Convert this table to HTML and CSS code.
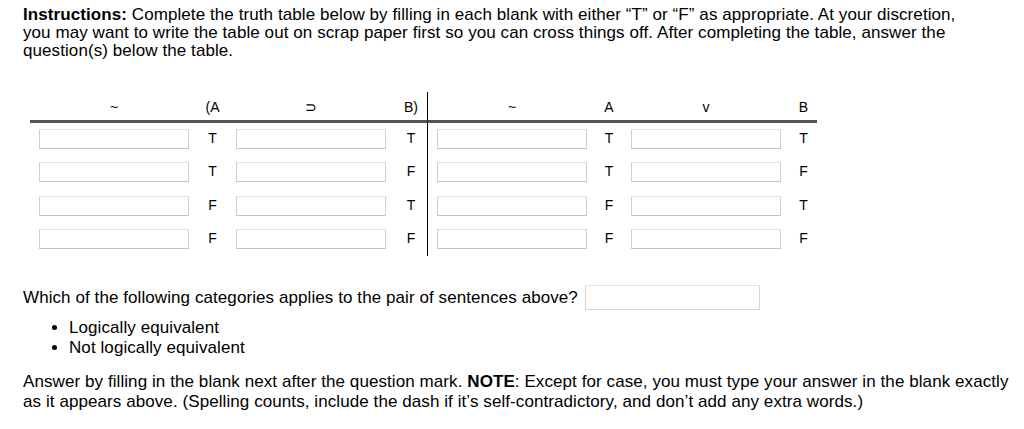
FILE: index.html
```html
<!DOCTYPE html>
<html>
<head>
<meta charset="utf-8">
<link rel="stylesheet" href="styles.css">
</head>
<body>
<div class="page">
  <p class="instructions"><b>Instructions:</b> Complete the truth table below by filling in each blank with either “T” or “F” as appropriate. At your discretion, you may want to write the table out on scrap paper first so you can cross things off. After completing the table, answer the question(s) below the table.</p>

  <div class="truth">
    <div class="hd">~</div>
    <div class="hd">(A</div>
    <div class="hd">⊃</div>
    <div class="hd split">B)</div>
    <div class="hd">~</div>
    <div class="hd">A</div>
    <div class="hd">v</div>
    <div class="hd">B</div>

    <div class="in"><span class="box"></span></div><div class="tv">T</div><div class="in"><span class="box"></span></div><div class="tv split">T</div>
    <div class="in"><span class="box"></span></div><div class="tv">T</div><div class="in"><span class="box"></span></div><div class="tv">T</div>

    <div class="in"><span class="box"></span></div><div class="tv">T</div><div class="in"><span class="box"></span></div><div class="tv split">F</div>
    <div class="in"><span class="box"></span></div><div class="tv">T</div><div class="in"><span class="box"></span></div><div class="tv">F</div>

    <div class="in"><span class="box"></span></div><div class="tv">F</div><div class="in"><span class="box"></span></div><div class="tv split">T</div>
    <div class="in"><span class="box"></span></div><div class="tv">F</div><div class="in"><span class="box"></span></div><div class="tv">T</div>

    <div class="in"><span class="box"></span></div><div class="tv">F</div><div class="in"><span class="box"></span></div><div class="tv split">F</div>
    <div class="in"><span class="box"></span></div><div class="tv">F</div><div class="in"><span class="box"></span></div><div class="tv">F</div>
  </div>

  <div class="question">
    <span>Which of the following categories applies to the pair of sentences above?</span>
    <span class="answer"></span>
  </div>

  <ul class="options">
    <li>Logically equivalent</li>
    <li>Not logically equivalent</li>
  </ul>

  <p class="note">Answer by filling in the blank next after the question mark. <b>NOTE</b>: Except for case, you must type your answer in the blank exactly as it appears above. (Spelling counts, include the dash if it’s self-contradictory, and don’t add any extra words.)</p>
</div>
</body>
</html>
```

FILE: styles.css
```css
html, body {
  margin: 0;
  padding: 0;
  background: #fff;
}
body {
  font-family: "Liberation Sans", Arial, Helvetica, sans-serif;
  color: #000;
  font-size: 17px;
  letter-spacing: 0.08px;
}
.page {
  padding: 6px 0 0 23px;
}
.instructions {
  margin: 0;
  width: 950px;
  line-height: 18px;
}
.truth {
  display: grid;
  grid-template-columns: 168px 29px 168px 33px 168px 26px 168px 27px;
  margin: 32px 0 0 7px;
  width: max-content;
  letter-spacing: 0;
}
.hd {
  height: 31px;
  box-sizing: border-box;
  border-bottom: 3px solid #555;
  font-size: 14px;
  line-height: 16px;
  display: flex;
  align-items: flex-end;
  justify-content: center;
  padding-bottom: 5px;
}
.split {
  border-right: 1px solid #000;
}
.in, .tv {
  height: 33.33px;
  box-sizing: border-box;
  padding-top: 6px;
}
.in {
  padding-left: 9px;
}
.box {
  display: block;
  width: 150px;
  height: 20px;
  box-sizing: border-box;
  border: 1px solid #cfcfcf;
  border-top-color: #e2e2e2;
  border-bottom-color: #c4c4c4;
  background: #fff;
}
.tv {
  text-align: center;
  font-size: 14px;
  line-height: 18px;
}
.question {
  display: flex;
  align-items: center;
  gap: 7px;
  margin-top: 29px;
  line-height: 20px;
}
.answer {
  display: block;
  width: 175px;
  height: 25px;
  box-sizing: border-box;
  border: 1px solid #d6d6d6;
  border-top-color: #e4e4e4;
}
.options {
  margin: 8px 0 0;
  padding-left: 46px;
  line-height: 20px;
}
.note {
  margin: 14px 0 0;
  width: 1000px;
  line-height: 20px;
}
```
